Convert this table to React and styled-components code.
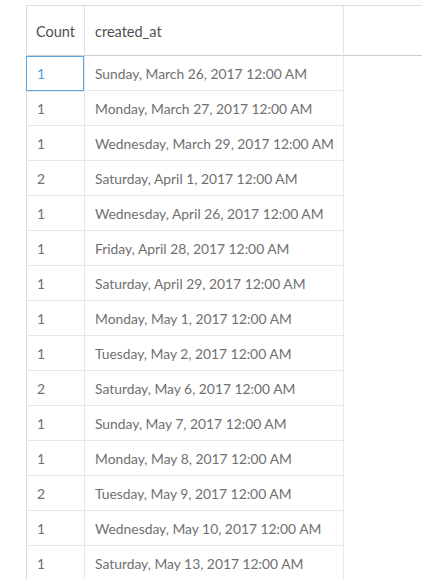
import React from 'react';
import styled, { createGlobalStyle } from 'styled-components';

const GlobalStyle = createGlobalStyle`
  html, body {
    margin: 0;
    padding: 0;
    background: #fff;
    font-family: Lato, "Open Sans", sans-serif;
  }
`;

const rows = [
  [1, 'Sunday, March 26, 2017 12:00 AM'],
  [1, 'Monday, March 27, 2017 12:00 AM'],
  [1, 'Wednesday, March 29, 2017 12:00 AM'],
  [2, 'Saturday, April 1, 2017 12:00 AM'],
  [1, 'Wednesday, April 26, 2017 12:00 AM'],
  [1, 'Friday, April 28, 2017 12:00 AM'],
  [1, 'Saturday, April 29, 2017 12:00 AM'],
  [1, 'Monday, May 1, 2017 12:00 AM'],
  [1, 'Tuesday, May 2, 2017 12:00 AM'],
  [2, 'Saturday, May 6, 2017 12:00 AM'],
  [1, 'Sunday, May 7, 2017 12:00 AM'],
  [1, 'Monday, May 8, 2017 12:00 AM'],
  [2, 'Tuesday, May 9, 2017 12:00 AM'],
  [1, 'Wednesday, May 10, 2017 12:00 AM'],
  [1, 'Saturday, May 13, 2017 12:00 AM'],
];

const Page = styled.div`
  padding: 5px 0 0 26px;
  height: 580px;
  overflow: hidden;
  box-sizing: border-box;
`;

const Table = styled.div`
  display: grid;
  grid-template-columns: 58px 259px 1fr;
  border-top: 1px solid #dcdcdc;
  border-left: 1px solid #dcdcdc;
`;

const HeadCell = styled.div`
  display: flex;
  align-items: center;
  padding-left: ${(p) => (p.first ? '9px' : '10px')};
  border-bottom: 1px solid #cfcfcf;
  border-right: ${(p) => (p.last ? 'none' : '1px solid #e3e3e3')};
  font-size: 14.5px;
  color: #4f4f4f;
  padding-top: 1px;
  box-sizing: border-box;
  height: 50px;
`;

const Cell = styled.div`
  display: flex;
  align-items: center;
  font-size: 13.85px;
  color: ${(p) => (p.selected ? '#4a9fe0' : '#707070')};
  border-bottom: 1px solid #e8e8e8;
  border-right: 1px solid #e8e8e8;
  box-shadow: ${(p) => (p.selected ? 'inset 0 0 0 1px #5aa6e3' : 'none')};
  margin: ${(p) => (p.selected ? '0 0 -1px -1px' : '0')};
  height: ${(p) => (p.selected ? '35px' : '34px')};
  padding-left: ${(p) => (p.selected ? '11px' : '10px')};
  position: relative;
`;

const Empty = styled.div``;

export default function App() {
  return (
    <Page>
      <GlobalStyle />
      <Table>
        <HeadCell first>Count</HeadCell>
        <HeadCell>created_at</HeadCell>
        <HeadCell last />
        {rows.map(([count, date], i) => (
          <React.Fragment key={i}>
            <Cell selected={i === 0}>{count}</Cell>
            <Cell>{date}</Cell>
            <Empty />
          </React.Fragment>
        ))}
      </Table>
    </Page>
  );
}
